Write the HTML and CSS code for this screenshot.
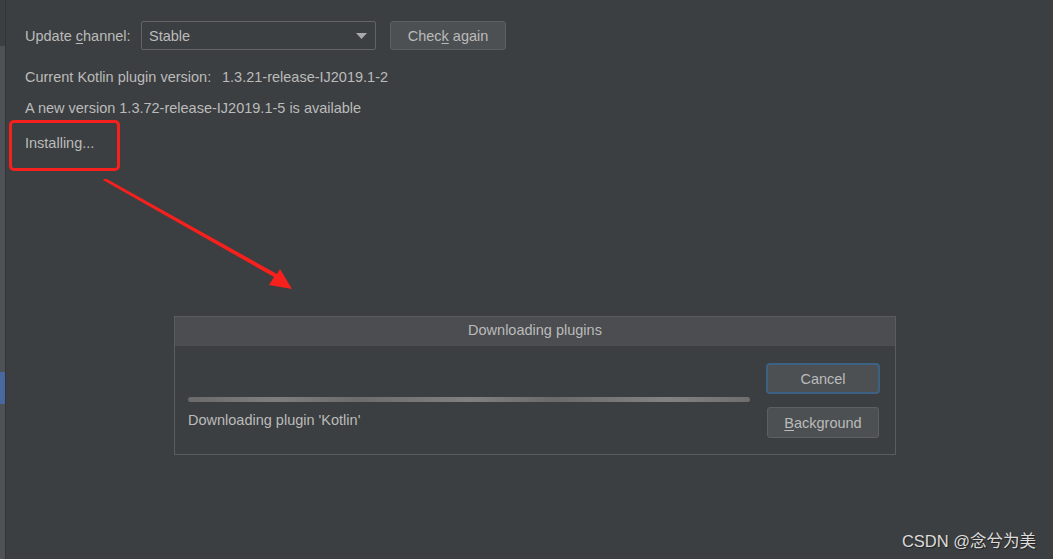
FILE: index.html
```html
<!DOCTYPE html>
<html>
<head>
    <meta charset="utf-8">
    <link rel="stylesheet" href="styles.css">
</head>
<body>
    <div class="side-strip">
        <div class="strip-top"></div>
        <div class="strip-mid"></div>
        <div class="strip-sel"></div>
        <div class="strip-end"></div>
    </div>

    <div class="panel">
        <div class="row channel-row">
            <span class="label">Update <u>c</u>hannel:</span>
            <div class="combo">
                <span>Stable</span>
                <svg class="combo-arrow" width="11" height="6" viewBox="0 0 11 6"><path d="M0 0 L11 0 L5.5 6 Z" fill="#a9a9a9"/></svg>
            </div>
            <button class="btn check-btn">Chec<u>k</u> again</button>
        </div>
        <div class="row version-row">
            <span class="label">Current Kotlin plugin version:</span>
            <span class="version">1.3.21-release-IJ2019.1-2</span>
        </div>
        <div class="row new-row">A new version 1.3.72-release-IJ2019.1-5 is available</div>
        <div class="row installing">Installing...</div>
    </div>

    <!-- annotation drawn over the screenshot -->
    <div class="mark-box"></div>
    <svg class="mark-arrow" width="200" height="120" viewBox="0 0 200 120">
        <path d="M1 1 L172 98 L167 106 L190 110 L178 90 L175 95 L3 -1 Z" fill="#f6201c"/>
    </svg>

    <!-- floating progress dialog -->
    <div class="dialog">
        <div class="dialog-title">Downloading plugins</div>
        <div class="dialog-body">
            <div class="dialog-main">
                <div class="progress"><div class="progress-fill"></div></div>
                <div class="progress-text">Downloading plugin 'Kotlin'</div>
            </div>
            <div class="dialog-buttons">
                <button class="btn cancel-btn">Cancel</button>
                <button class="btn bg-btn"><u>B</u>ackground</button>
            </div>
        </div>
    </div>

    <div class="watermark">CSDN @念兮为美</div>
</body>
</html>
```

FILE: styles.css
```css
html, body {
    margin: 0;
    padding: 0;
}

body {
    width: 1053px;
    height: 559px;
    overflow: hidden;
    position: relative;
    display: flex;
    flex-direction: row;
    background-color: #3c3f41;
    color: #bbbbbb;
    font-family: "Liberation Sans", Arial, "Noto Sans CJK SC", sans-serif;
    font-size: 14.5px;
}

u {
    text-decoration-thickness: 1px;
    text-underline-offset: 2px;
}

/* left tool strip */
.side-strip {
    width: 5px;
    border-right: 1px solid #323436;
    display: flex;
    flex-direction: column;
}
.strip-top {
    height: 46px;
    background-color: #3c3f41;
}
.strip-mid {
    height: 326px;
    background-color: #4e5156;
}
.strip-sel {
    height: 32px;
    background-color: #4a68a0;
}
.strip-end {
    flex: 1;
    background-color: #4e5156;
}

/* settings panel */
.panel {
    flex: 1;
    padding: 21px 0 0 19px;
    display: flex;
    flex-direction: column;
}

.row {
    display: flex;
    align-items: center;
}

.channel-row {
    height: 29px;
}
.channel-row .label {
    width: 116px;
}

.combo {
    box-sizing: border-box;
    width: 235px;
    height: 29px;
    border: 1px solid #646464;
    border-radius: 2px;
    background-color: #3c3f41;
    display: flex;
    align-items: center;
    justify-content: space-between;
    padding: 0 8px 0 7px;
}

.btn {
    box-sizing: border-box;
    font-family: inherit;
    font-size: 14.5px;
    color: #bbbbbb;
    background-color: #4c5052;
    border: 1px solid #5e6060;
    border-radius: 3px;
    padding: 0;
}

.check-btn {
    width: 116px;
    height: 29px;
    margin-left: 14px;
}

.version-row {
    margin-top: 18px;
    height: 17px;
}
.version-row .label {
    width: 197px;
}

.new-row {
    margin-top: 14px;
    height: 17px;
}

.installing {
    margin-top: 18px;
    height: 17px;
}

/* annotation */
.mark-box {
    position: absolute;
    left: 9px;
    top: 120px;
    width: 105px;
    height: 45px;
    border: 3px solid #f6201c;
    border-radius: 5px;
}

.mark-arrow {
    position: absolute;
    left: 102px;
    top: 179px;
}

/* dialog */
.dialog {
    position: absolute;
    left: 174px;
    top: 316px;
    width: 720px;
    height: 137px;
    border: 1px solid #5a5d60;
    background-color: #3c3f41;
    display: flex;
    flex-direction: column;
}

.dialog-title {
    height: 29px;
    background-color: #4b4d50;
    text-align: center;
    line-height: 27px;
    color: #bbbbbb;
}

.dialog-body {
    flex: 1;
    display: flex;
    padding: 17px 15px 0 13px;
}

.dialog-main {
    flex: 1;
    padding-top: 34px;
}

.progress {
    width: 562px;
    height: 5px;
    border-radius: 3px;
    background-color: #555759;
    overflow: hidden;
}
.progress-fill {
    height: 100%;
    background: linear-gradient(to right, #6a6a6a 0%, #7e7e7e 15%, #6c6c6c 30%, #808080 50%, #6a6a6a 65%, #828282 85%, #6e6e6e 100%);
}

.progress-text {
    margin-top: 10px;
}

.dialog-buttons {
    width: 114px;
    display: flex;
    flex-direction: column;
    align-items: center;
}

.cancel-btn {
    width: 114px;
    height: 31px;
    border: 2px solid #3d6185;
    border-radius: 4px;
    background-color: #4c5052;
}

.bg-btn {
    width: 112px;
    height: 31px;
    margin-top: 13px;
}

.watermark {
    position: absolute;
    right: 17px;
    top: 528px;
    font-size: 16.5px;
    color: #dcdcdc;
    text-shadow: 1px 1px 1px #222;
}
```
